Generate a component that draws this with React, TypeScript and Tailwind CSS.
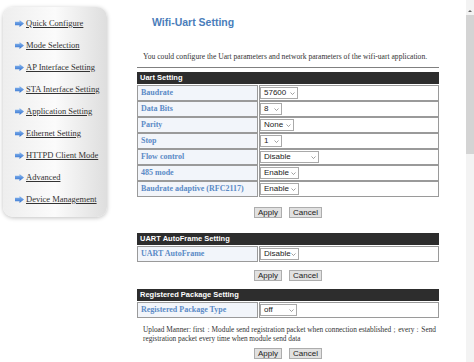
import React from 'react'

const serif = "font-['Liberation_Serif','Times_New_Roman',serif]"
const narrow = "font-['Liberation_Sans_Narrow','Liberation_Sans',Arial,sans-serif]"

const menu = [
  'Quick Configure',
  'Mode Selection',
  'AP Interface Setting',
  'STA Interface Setting',
  'Application Setting',
  'Ethernet Setting',
  'HTTPD Client Mode',
  'Advanced',
  'Device Management',
]

type Row = { label: string; value: string; w: string }

const uartRows: Row[] = [
  { label: 'Baudrate', value: '57600', w: 'w-[38px]' },
  { label: 'Data Bits', value: '8', w: 'w-[22px]' },
  { label: 'Parity', value: 'None', w: 'w-[34px]' },
  { label: 'Stop', value: '1', w: 'w-[22px]' },
  { label: 'Flow control', value: 'Disable', w: 'w-[59px]' },
  { label: '485 mode', value: 'Enable', w: 'w-[39px]' },
  { label: 'Baudrate adaptive (RFC2117)', value: 'Enable', w: 'w-[39px]' },
]

function Arrow() {
  return (
    <svg width="9" height="7" viewBox="0 0 9 7" className="shrink-0">
      <defs>
        <linearGradient id="ag" x1="0" y1="0" x2="0" y2="1">
          <stop offset="0" stopColor="#8fbcf0" />
          <stop offset="1" stopColor="#2f6fcf" />
        </linearGradient>
      </defs>
      <path d="M0 1.8 H4.5 V0 L9 3.5 L4.5 7 V5.2 H0 Z" fill="url(#ag)" />
    </svg>
  )
}

function Select({ value, w }: { value: string; w: string }) {
  return (
    <div
      className={`${w} h-[12px] flex items-center justify-between border border-[#a9a9a9] bg-white pl-[3px] pr-[2px] ${narrow} text-[8px] text-[#222]`}
    >
      <span className="leading-none">{value}</span>
      <svg width="5" height="3" viewBox="0 0 5 3" className="shrink-0">
        <path d="M0.5 0.5 L2.5 2.5 L4.5 0.5" fill="none" stroke="#777" strokeWidth="0.7" />
      </svg>
    </div>
  )
}

function Header({ title }: { title: string }) {
  return (
    <div className={`h-[12px] bg-[#2d2d2d] flex items-center pl-[3px] text-white font-bold ${narrow} text-[7.5px]`}>
      {title}
    </div>
  )
}

function TableRow({ row }: { row: Row }) {
  return (
    <div className="flex h-[16px] gap-[1px]">
      <div
        className={`w-[121px] shrink-0 border border-[#9a9a9a] bg-[#f2f5fa] flex items-center pl-[3px] ${serif} font-bold text-[8px] text-[#5a8ac6]`}
      >
        {row.label}
      </div>
      <div className="flex-1 border border-[#9a9a9a] bg-white flex items-center">
        <Select value={row.value} w={row.w} />
      </div>
    </div>
  )
}

function Buttons() {
  return (
    <div className="flex justify-center gap-[7px]">
      {['Apply', 'Cancel'].map((b) => (
        <div
          key={b}
          className={`h-[11px] ${b === 'Apply' ? 'w-[28px]' : 'w-[33px]'} bg-[#e1e1e1] border border-[#adadad] flex items-center justify-center ${narrow} text-[8px] text-[#222]`}
        >
          {b}
        </div>
      ))}
    </div>
  )
}

export default function App() {
  return (
    <div className="w-[474px] h-[362px] overflow-hidden bg-white flex">
      {/* Sidebar */}
      <div className="w-[137px] shrink-0 pl-[3px] pt-[7px]">
        <div className="w-[104px] h-[210px] rounded-[10px] bg-gradient-to-r from-[#eeeeee] via-[#fbfbfb] to-[#dedede] shadow-[0_1px_4px_rgba(0,0,0,0.25)] pt-[5px] pl-[12px]">
          {menu.map((m) => (
            <div key={m} className="h-[22px] flex items-center gap-[2px]">
              <Arrow />
              <span className={`${serif} text-[8.5px] text-[#333] underline`}>{m}</span>
            </div>
          ))}
        </div>
      </div>

      {/* Main */}
      <div className="w-[302px] shrink-0 pt-[16px]">
        <div className="pl-[15px] h-[14px] flex items-center font-['Liberation_Sans',Arial,sans-serif] font-bold text-[10.5px] text-[#4a7dba]">
          Wifi-Uart Setting
        </div>
        <div className={`mt-[22px] pl-[6px] h-[10px] flex items-center whitespace-nowrap ${serif} text-[7.6px] text-[#333]`}>
          You could configure the Uart parameters and network parameters of the wifi-uart application.
        </div>
        <div className="mt-[5px] border-t border-[#808080]" />

        <div className="mt-[4px]">
          <Header title="Uart Setting" />
        </div>
        <div className="mt-[1px]">
          {uartRows.map((r) => (
            <TableRow key={r.label} row={r} />
          ))}
        </div>
        <div className="mt-[10px]">
          <Buttons />
        </div>

        <div className="mt-[15px]">
          <Header title="UART AutoFrame Setting" />
        </div>
        <div className="mt-[1px]">
          <TableRow row={{ label: 'UART AutoFrame', value: 'Disable', w: 'w-[39px]' }} />
        </div>
        <div className="mt-[8px]">
          <Buttons />
        </div>

        <div className="mt-[8px]">
          <Header title="Registered Package Setting" />
        </div>
        <div className="mt-[1px]">
          <TableRow row={{ label: 'Registered Package Type', value: 'off', w: 'w-[37px]' }} />
        </div>
        <div className={`mt-[7px] pl-[6px] whitespace-nowrap ${serif} text-[7.3px] leading-[9px] text-[#333]`}>
          <div>Upload Manner: first：Module send registration packet when connection established；every：Send</div>
          <div>registration packet every time when module send data</div>
        </div>
        <div className="mt-[5px]">
          <Buttons />
        </div>
      </div>

      <div className="flex-1" />

      {/* Scrollbar */}
      <div className="w-[8px] shrink-0 bg-[#f3f3f3] flex flex-col items-center">
        <svg width="6" height="6" viewBox="0 0 6 6" className="mt-[8px]">
          <path d="M1 4 L3 2 L5 4 Z" fill="#666" />
        </svg>
        <div className="mt-[1px] w-[8px] h-[139px] bg-[#d4d4d4]" />
      </div>
    </div>
  )
}
